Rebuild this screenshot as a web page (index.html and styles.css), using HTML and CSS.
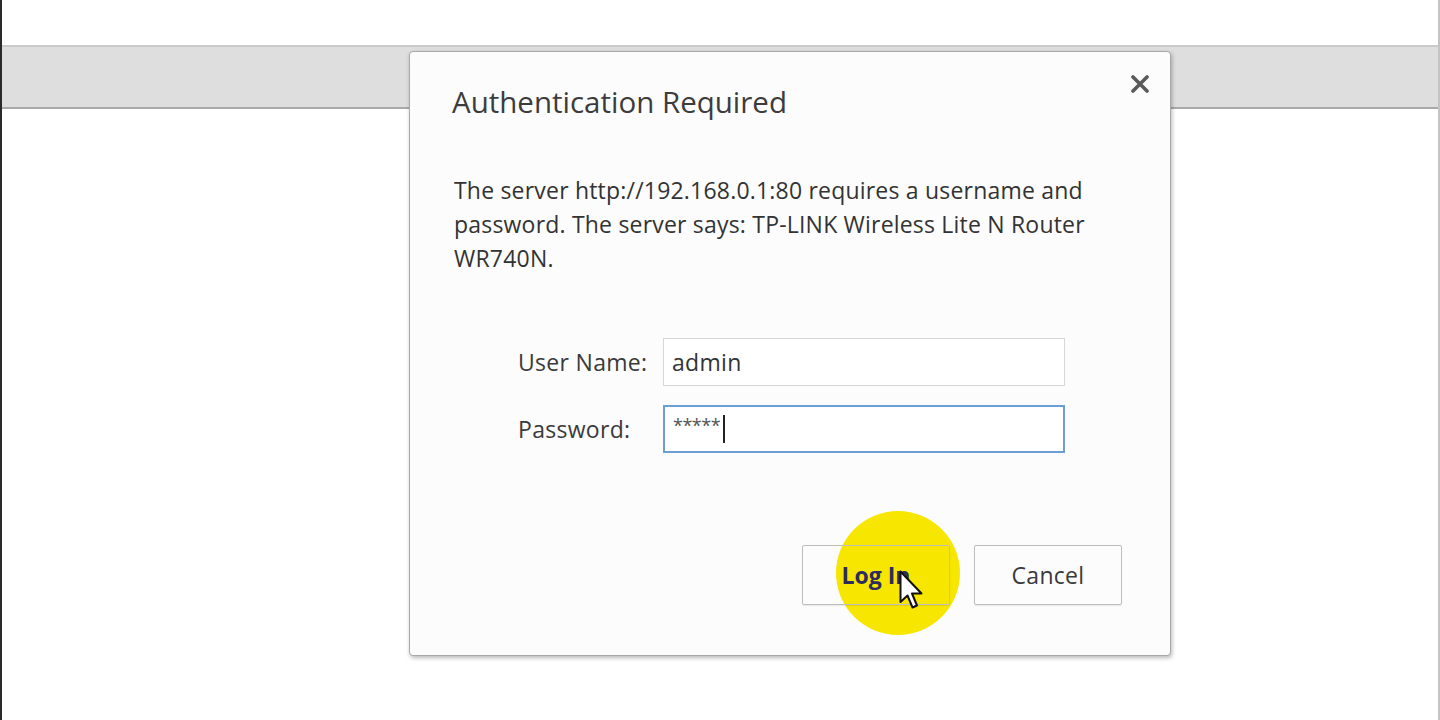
FILE: index.html
```html
<!DOCTYPE html>
<html>
<head>
<meta charset="utf-8">
<link rel="stylesheet" href="styles.css">
</head>
<body>
<div class="frame">
  <div class="topbar"></div>
  <div class="dialog">
    <div class="close">
      <svg width="18" height="18" viewBox="0 0 18 18"><path d="M2 2 L16 16 M16 2 L2 16" stroke="#5a5a5a" stroke-width="3.6" stroke-linecap="round"/></svg>
    </div>
    <h1 class="title">Authentication Required</h1>
    <p class="message">The server http://192.168.0.1:80 requires a username and password. The server says: TP-LINK Wireless Lite N Router WR740N.</p>
    <div class="form">
      <label class="label">User Name:</label>
      <div class="field">admin</div>
      <label class="label">Password:</label>
      <div class="field focused"><span class="stars">*****</span><span class="caret"></span></div>
    </div>
    <div class="actions">
      <div class="highlight"></div>
      <div class="btn primary">Log In</div>
      <div class="btn">Cancel</div>
      <svg class="cursor" width="26" height="44" viewBox="0 0 26 44"><path d="M1.5 1.5 L1.5 32 L8.5 25.5 L13.5 37.5 L18 35.5 L13 23.5 L22.5 23.5 Z" fill="#ffffff" stroke="#111" stroke-width="2" stroke-linejoin="round"/></svg>
    </div>
  </div>
</div>
</body>
</html>
```
FILE: styles.css
```css
html, body {
  margin: 0;
  padding: 0;
  background: #ffffff;
}
body {
  width: 1440px;
  height: 720px;
  overflow: hidden;
  font-family: "Open Sans", "Noto Sans", sans-serif;
  color: #3a3a3a;
}
.frame {
  position: relative;
  box-sizing: border-box;
  width: 1440px;
  height: 720px;
  border-left: 2px solid #2a2a2a;
  border-right: 2px solid #c4c4c4;
  padding-top: 45px;
}
.topbar {
  height: 60px;
  background: #dedede;
  border-top: 2px solid #cacaca;
  border-bottom: 2px solid #a9a9a9;
}
.dialog {
  position: absolute;
  left: 407px;
  top: 51px;
  box-sizing: border-box;
  width: 762px;
  height: 605px;
  background: #fcfcfc;
  border: 1px solid #a8a8a8;
  border-radius: 4px;
  box-shadow: 1px 2px 4px rgba(0,0,0,0.28);
  padding: 30px 48px 0 43px;
}
.close {
  position: absolute;
  right: 21px;
  top: 23px;
  width: 18px;
  height: 18px;
}
.close svg { display: block; }
.title {
  margin: 0 0 0 -1px;
  font-weight: 400;
  font-size: 29.5px;
  line-height: 40px;
  color: #3c3c3c;
}
.message {
  margin: 51px 0 0 1px;
  font-size: 23px;
  line-height: 34px;
  width: 665px;
  color: #333;
  letter-spacing: 0.2px;
}
.form {
  display: grid;
  grid-template-columns: 147px 400px;
  row-gap: 19px;
  align-items: center;
  margin: 63px 0 0 65px;
}
.label {
  font-size: 23px;
  color: #3a3a3a;
  letter-spacing: 0.3px;
}
.field {
  box-sizing: border-box;
  height: 48px;
  margin-left: -2px;
  border: 1.5px solid #d6d6d6;
  background: #ffffff;
  padding: 0 8px;
  display: flex;
  align-items: center;
  font-size: 23px;
  color: #333;
  letter-spacing: 0.3px;
}
.field.focused {
  border: 2px solid #6d9ed6;
}
.stars {
  font-size: 18px;
  letter-spacing: -0.5px;
  color: #555;
  margin-top: -8px;
}
.caret {
  display: inline-block;
  width: 2px;
  height: 28px;
  background: #222;
  margin-left: 3px;
}
.actions {
  position: relative;
  display: flex;
  justify-content: flex-end;
  gap: 24px;
  margin-top: 92px;
}
.btn {
  position: relative;
  z-index: 1;
  box-sizing: border-box;
  width: 148px;
  height: 60px;
  border: 1.5px solid #bdbdbd;
  border-radius: 2px;
  background: transparent;
  display: flex;
  align-items: center;
  justify-content: center;
  font-size: 23px;
  color: #3a3a3a;
  letter-spacing: 0.3px;
  box-shadow: 0 1px 1px rgba(0,0,0,0.08);
}
.btn.primary {
  font-weight: 700;
  letter-spacing: 0;
  color: #2e2c5e;
}
.highlight {
  position: absolute;
  z-index: 0;
  left: 383px;
  top: -34px;
  width: 124px;
  height: 124px;
  border-radius: 50%;
  background: #f7e600;
}
.cursor {
  position: absolute;
  z-index: 2;
  left: 446px;
  top: 25px;
}
```
